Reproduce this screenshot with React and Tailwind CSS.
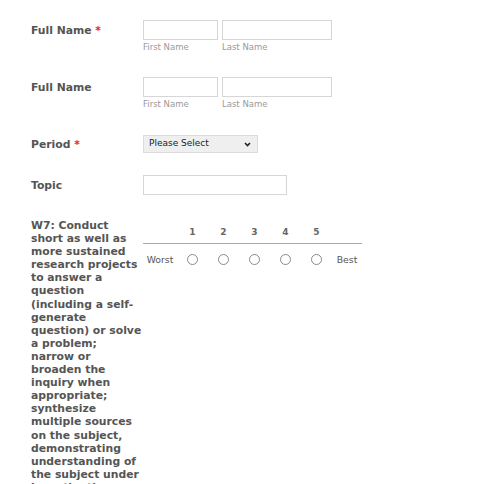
export default function App() {
  const font = { fontFamily: '"DejaVu Sans", Verdana, sans-serif' };
  const label = "w-[143px] shrink-0 pl-[31px] text-[10.8px] leading-[13.1px] font-bold text-[#555]";
  const inputCls = "h-[20px] border border-[#d6d6d6] bg-white";
  const sub = "text-[8.5px] leading-[12px] text-[#9a9a9a] mt-[1px]";
  return (
    <div className="w-[500px] h-[484px] bg-white overflow-hidden" style={font}>
      <div className="flex pt-[20px]">
        <div className={label + " h-[20px] flex items-center pt-[1px]"}>
          <span>Full Name <span className="text-[#ee2222]">*</span></span>
        </div>
        <div className="flex gap-[4px]">
          <div>
            <div className={inputCls + " w-[75px]"} />
            <div className={sub}>First Name</div>
          </div>
          <div>
            <div className={inputCls + " w-[110px]"} />
            <div className={sub}>Last Name</div>
          </div>
        </div>
      </div>
      <div className="flex mt-[24px]">
        <div className={label + " h-[20px] flex items-center pt-[1px]"}>Full Name</div>
        <div className="flex gap-[4px]">
          <div>
            <div className={inputCls + " w-[75px]"} />
            <div className={sub}>First Name</div>
          </div>
          <div>
            <div className={inputCls + " w-[110px]"} />
            <div className={sub}>Last Name</div>
          </div>
        </div>
      </div>
      <div className="flex mt-[25px]">
        <div className={label + " h-[18px] flex items-center pt-[1px]"}>
          <span>Period <span className="text-[#ee2222]">*</span></span>
        </div>
        <div className="w-[115px] h-[18px] border border-[#dcdcdc] bg-[#efefef] flex items-center justify-between pl-[5px] pr-[6px]">
          <span className="text-[9px] text-[#222]">Please Select</span>
          <svg width="7" height="5" viewBox="0 0 7 5"><path d="M1 1 L3.5 3.6 L6 1" fill="none" stroke="#222" strokeWidth="1.6" /></svg>
        </div>
      </div>
      <div className="flex mt-[22px]">
        <div className={label + " h-[20px] flex items-center pt-[1px]"}>Topic</div>
        <div className={inputCls + " w-[144px]"} />
      </div>
      <div className="flex mt-[24px]">
        <div className={label}>
          W7: Conduct short as well as more sustained research projects to answer a question (including a self-generate question) or solve a problem; narrow or broaden the inquiry when appropriate; synthesize multiple sources on the subject, demonstrating understanding of the subject under investigation.
        </div>
        <div className="w-[219px] pt-[2px]">
          <div className="flex h-[23px] items-center border-b border-[#aaa] pt-[1px]">
            <div className="w-[34px]" />
            {[1, 2, 3, 4, 5].map((n) => (
              <div key={n} className="w-[31px] text-center text-[9px] font-bold text-[#666]">{n}</div>
            ))}
          </div>
          <div className="flex h-[30px] items-center pt-[1px]">
            <div className="w-[34px] text-center text-[9.3px] text-[#555]">Worst</div>
            {[1, 2, 3, 4, 5].map((n) => (
              <div key={n} className="w-[31px] flex justify-center">
                <div className="w-[11px] h-[11px] rounded-full border border-[#8a8a8a] bg-white" />
              </div>
            ))}
            <div className="w-[30px] text-center text-[9.3px] text-[#555]">Best</div>
          </div>
        </div>
      </div>
    </div>
  );
}
